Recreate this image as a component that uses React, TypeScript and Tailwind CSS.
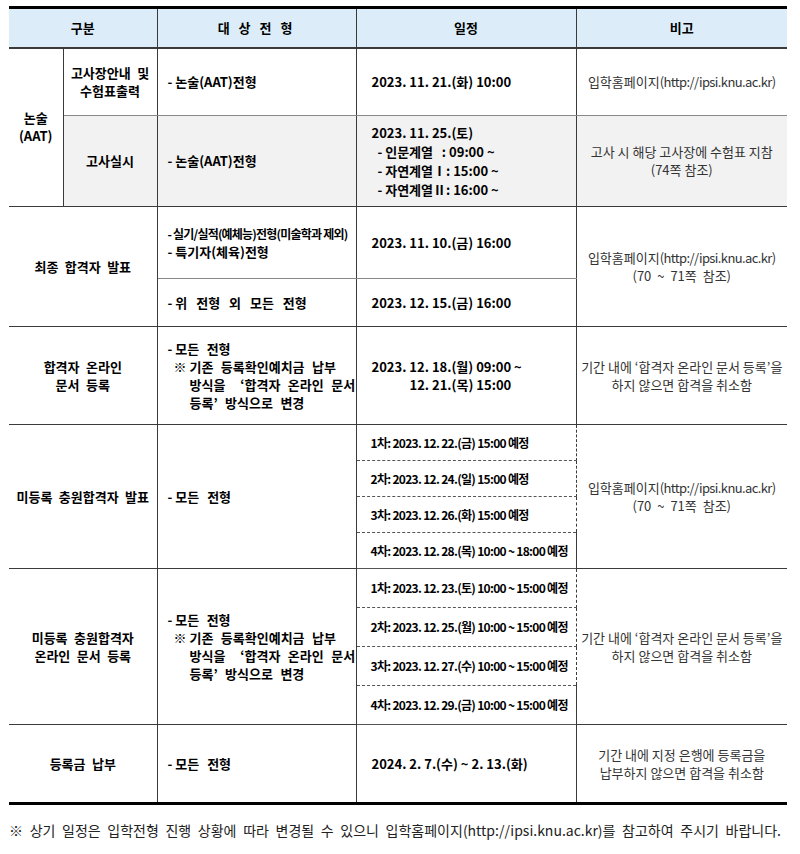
import React from 'react';

const td = 'border-r border-b border-[#3a3a3a] text-[13px] leading-[18px] font-semibold text-black align-middle';
const ws = '[word-spacing:3.5px]';
const last = 'border-r-0 border-b border-[#3a3a3a] text-[13px] leading-[18px] text-[#333] text-center align-middle';
const dash = 'border-r border-b border-dashed border-b-[#555] border-r-[#3a3a3a] text-[12px] font-semibold tracking-[-0.7px] pl-[14px] align-middle';

const Url = () => <span className="tracking-[-0.6px]">(http://ipsi.knu.ac.kr)</span>;
const Pages = () => <span className="[word-spacing:3px]">(70 ~ 71쪽 참조)</span>;
// marker keeps its gap tight while the rest of the line uses wider word spacing
const Mk = ({ c }: { c: string }) => <span className="[word-spacing:0px]">{c} </span>;

const Note = () => (
  <div className="pl-[10px] [word-spacing:4.5px]">
    <div><Mk c="-" />모든 전형</div>
    <div className="pl-[6px]"><Mk c="※" />기존 등록확인예치금 납부</div>
    <div className="pl-[22px]">방식을&nbsp; ‘합격자 온라인 문서</div>
    <div className="pl-[22px]">등록’ 방식으로 변경</div>
  </div>
);

const App: React.FC = () => {
  const first = ['1차: 2023. 12. 22.(금) 15:00 예정', '2차: 2023. 12. 24.(일) 15:00 예정', '3차: 2023. 12. 26.(화) 15:00 예정', '4차: 2023. 12. 28.(목) 10:00 ~ 18:00 예정'];
  const second = ['1차: 2023. 12. 23.(토) 10:00 ~ 15:00 예정', '2차: 2023. 12. 25.(월) 10:00 ~ 15:00 예정', '3차: 2023. 12. 27.(수) 10:00 ~ 15:00 예정', '4차: 2023. 12. 29.(금) 10:00 ~ 15:00 예정'];

  return (
    <div className="w-[800px] h-[854px] bg-white font-['Noto_Sans_CJK_KR','Noto_Sans',sans-serif] pt-[6px]">
      <table className="ml-[9px] w-[778px] table-fixed border-collapse border-t-[3px] border-b-[3px] border-t-black border-b-black">
        <colgroup>
          <col className="w-[54px]" />
          <col className="w-[94px]" />
          <col className="w-[199px]" />
          <col className="w-[220px]" />
          <col className="w-[211px]" />
        </colgroup>
        <thead>
          <tr className="h-[40px] bg-[#dcedf9]">
            <th colSpan={2} className="border-r border-b-2 border-[#3a3a3a] text-[13px] font-semibold">구분</th>
            <th className="border-r border-b-2 border-[#3a3a3a] text-[13px] font-semibold tracking-[3px]">대 상 전 형</th>
            <th className="border-r border-b-2 border-[#3a3a3a] text-[13px] font-semibold">일정</th>
            <th className="border-b-2 border-[#3a3a3a] text-[13px] font-semibold">비고</th>
          </tr>
        </thead>
        <tbody>
          <tr className="h-[68px]">
            <td rowSpan={2} className={`${td} text-center`}>논술<br />(AAT)</td>
            <td className={`${td} ${ws} border-b-[#888] text-center`}>고사장안내 및<br />수험표출력</td>
            <td className={`${td} border-b-[#888] pl-[10px]`}>- 논술(AAT)전형</td>
            <td className={`${td} border-b-[#888] pl-[15px]`}>2023. 11. 21.(화) 10:00</td>
            <td className={`${last} border-b-[#888]`}>입학홈페이지<Url /></td>
          </tr>
          <tr className="h-[91px] bg-[#f2f2f2]">
            <td className={`${td} text-center`}>고사실시</td>
            <td className={`${td} pl-[10px]`}>- 논술(AAT)전형</td>
            <td className={`${td} pl-[15px] leading-[19px] whitespace-pre`}>
              <div>2023. 11. 25.(토)</div>
              <div>{'  - 인문계열   : 09:00 ~'}</div>
              <div>{'  - 자연계열Ⅰ: 15:00 ~'}</div>
              <div>{'  - 자연계열Ⅱ: 16:00 ~'}</div>
            </td>
            <td className={last}>고사 시 해당 고사장에 수험표 지참<br />(74쪽 참조)</td>
          </tr>

          <tr className="h-[72px]">
            <td colSpan={2} rowSpan={2} className={`${td} ${ws} text-center`}>최종 합격자 발표</td>
            <td className={`${td} border-b-[#888] pl-[10px]`}>
              <div className="text-[12px] tracking-[-0.8px]">- 실기/실적(예체능)전형(미술학과 제외)</div>
              <div>- 특기자(체육)전형</div>
            </td>
            <td className={`${td} border-b-[#888] pl-[15px]`}>2023. 11. 10.(금) 16:00</td>
            <td rowSpan={2} className={last}>입학홈페이지<Url /><br /><Pages /></td>
          </tr>
          <tr className="h-[48px]">
            <td className={`${td} pl-[10px] [word-spacing:6px]`}><Mk c="-" />위 전형 외 모든 전형</td>
            <td className={`${td} pl-[15px]`}>2023. 12. 15.(금) 16:00</td>
          </tr>

          <tr className="h-[98px]">
            <td colSpan={2} className={`${td} ${ws} text-center`}>합격자 온라인<br />문서 등록</td>
            <td className={td}><Note /></td>
            <td className={`${td} pl-[15px]`}>
              <div>2023. 12. 18.(월) 09:00 ~</div>
              <div className="pl-[38px]">12. 21.(목) 15:00</div>
            </td>
            <td className={last}>기간 내에 ‘합격자 온라인 문서 등록’을<br />하지 않으면 합격을 취소함</td>
          </tr>

          {first.map((t, i) => (
            <tr key={t} className="h-[36px]">
              {i === 0 && (
                <>
                  <td colSpan={2} rowSpan={4} className={`${td} ${ws} text-center`}>미등록 충원합격자 발표</td>
                  <td rowSpan={4} className={`${td} pl-[10px] [word-spacing:5px]`}><Mk c="-" />모든 전형</td>
                </>
              )}
              <td className={i === 3 ? `${dash} border-solid border-b-[#3a3a3a]` : dash}>{t}</td>
              {i === 0 && (
                <td rowSpan={4} className={last}>입학홈페이지<Url /><br /><Pages /></td>
              )}
            </tr>
          ))}

          {second.map((t, i) => (
            <tr key={t} className="h-[39px]">
              {i === 0 && (
                <>
                  <td colSpan={2} rowSpan={4} className={`${td} ${ws} text-center`}>미등록 충원합격자<br />온라인 문서 등록</td>
                  <td rowSpan={4} className={td}><Note /></td>
                </>
              )}
              <td className={i === 3 ? `${dash} border-solid border-b-[#3a3a3a]` : dash}>{t}</td>
              {i === 0 && (
                <td rowSpan={4} className={last}>기간 내에 ‘합격자 온라인 문서 등록’을<br />하지 않으면 합격을 취소함</td>
              )}
            </tr>
          ))}

          <tr className="h-[79px]">
            <td colSpan={2} className={`${td} ${ws} border-b-0 text-center`}>등록금 납부</td>
            <td className={`${td} border-b-0 pl-[10px] [word-spacing:5px]`}><Mk c="-" />모든 전형</td>
            <td className={`${td} border-b-0 pl-[15px]`}>2024. 2. 7.(수) ~ 2. 13.(화)</td>
            <td className={`${last} border-b-0`}>기간 내에 지정 은행에 등록금을<br />납부하지 않으면 합격을 취소함</td>
          </tr>
        </tbody>
      </table>
      <p className="mt-[15px] ml-[9px] text-[14px] text-[#222] whitespace-nowrap [word-spacing:3.5px]">
        ※ 상기 일정은 입학전형 진행 상황에 따라 변경될 수 있으니 입학홈페이지(http://ipsi.knu.ac.kr)를 참고하여 주시기 바랍니다.
      </p>
    </div>
  );
};

export default App;
